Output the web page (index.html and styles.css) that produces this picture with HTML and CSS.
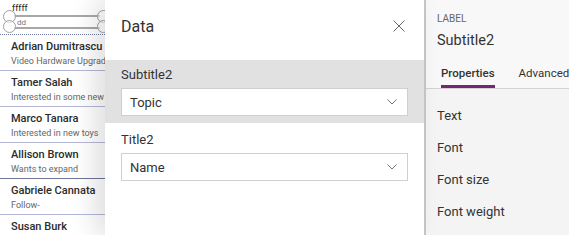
FILE: index.html
```html
<!DOCTYPE html>
<html>
<head>
<meta charset="utf-8">
<link rel="stylesheet" href="styles.css">
</head>
<body>
<div class="app">
  <div class="list">
    <div class="sel">
      <div class="sel-top">fffff</div>
      <div class="sel-sub">dd</div>
      <span class="hline h1"></span>
      <span class="hline h2"></span>
      <span class="handle hl1"></span>
      <span class="handle hl2"></span>
      <span class="handle hr1"></span>
      <span class="handle hr2"></span>
    </div>
    <div class="row"><div class="name">Adrian Dumitrascu</div><div class="sub">Video Hardware Upgrade</div></div>
    <div class="row"><div class="name">Tamer Salah</div><div class="sub">Interested in some new</div></div>
    <div class="row"><div class="name">Marco Tanara</div><div class="sub">Interested in new toys</div></div>
    <div class="row dark"><div class="name">Allison Brown</div><div class="sub">Wants to expand</div></div>
    <div class="row"><div class="name">Gabriele Cannata</div><div class="sub">Follow-</div></div>
    <div class="row"><div class="name">Susan Burk</div><div class="sub">Interested</div></div>
  </div>
  <div class="data">
    <div class="data-head">
      <span class="data-title">Data</span>
      <svg class="close" width="12" height="12" viewBox="0 0 12 12"><path d="M0.5 0.5 L11.5 11.5 M11.5 0.5 L0.5 11.5" stroke="#666" stroke-width="1" fill="none"/></svg>
    </div>
    <div class="field active">
      <div class="flabel">Subtitle2</div>
      <div class="dd"><span>Topic</span><svg width="10" height="6" viewBox="0 0 10 6"><path d="M0.5 0.5 L5 5 L9.5 0.5" stroke="#777" fill="none"/></svg></div>
    </div>
    <div class="field">
      <div class="flabel">Title2</div>
      <div class="dd"><span>Name</span><svg width="10" height="6" viewBox="0 0 10 6"><path d="M0.5 0.5 L5 5 L9.5 0.5" stroke="#777" fill="none"/></svg></div>
    </div>
  </div>
  <div class="props">
    <div class="props-head">
      <div class="kind">LABEL</div>
      <div class="pname">Subtitle2</div>
      <div class="tabs">
        <div class="tab on">Properties</div>
        <div class="tab">Advanced</div>
      </div>
    </div>
    <div class="plist">
      <div class="pitem">Text</div>
      <div class="pitem">Font</div>
      <div class="pitem">Font size</div>
      <div class="pitem">Font weight</div>
    </div>
  </div>
</div>
</body>
</html>
```
FILE: styles.css
```css
* { box-sizing: border-box; }
html, body { margin: 0; padding: 0; }
body {
  width: 569px;
  height: 235px;
  overflow: hidden;
  font-family: Roboto, "Open Sans", sans-serif;
  color: #333;
  background: #fff;
}
.app {
  display: flex;
  height: 235px;
  overflow: hidden;
}
.list {
  width: 105px;
  flex: none;
  overflow: hidden;
  background: #fff;
}
.sel {
  position: relative;
  height: 35px;
  border-bottom: 1px dotted #6d7aa3;
}
.sel-top {
  position: absolute;
  left: 12px;
  top: 2px;
  font-size: 9px;
  line-height: 12px;
  color: #222;
}
.sel-sub {
  position: absolute;
  left: 17px;
  top: 17px;
  font-size: 8px;
  line-height: 12px;
  color: #777;
}
.hline {
  position: absolute;
  left: 14px;
  width: 86px;
  height: 2px;
  background: #a8a8a8;
}
.h1 { top: 15px; }
.h2 { top: 27px; }
.handle {
  position: absolute;
  width: 13px;
  height: 13px;
  border-radius: 50%;
  border: 1px solid #a0a0a0;
  background: rgba(255,255,255,0.6);
}
.hl1 { left: 3px; top: 10px; }
.hl2 { left: 3px; top: 20px; }
.hr1 { left: 97px; top: 10px; }
.hr2 { left: 97px; top: 20px; }
.row {
  height: 36px;
  padding: 4px 0 0 11px;
  border-bottom: 1px solid #b4b8d6;
  white-space: nowrap;
  overflow: hidden;
}
.row.dark { border-bottom-color: #6e7599; }
.name {
  font-size: 11px;
  line-height: 15px;
  font-weight: 500;
  color: #2b2b2b;
}
.sub {
  font-size: 9px;
  line-height: 15px;
  color: #666;
}
.data {
  width: 319px;
  flex: none;
  background: #fff;
  box-shadow: -10px 0 24px rgba(0,0,0,0.13);
  position: relative;
  z-index: 2;
}
.data-head {
  height: 60px;
  display: flex;
  align-items: center;
  justify-content: space-between;
  padding: 0 19px 8px 16px;
}
.data-title {
  font-size: 16px;
  color: #333;
}
.field {
  padding: 7px 16px 7px 16px;
}
.field.active {
  background: #e1e1e1;
  padding-top: 6px;
}
.flabel {
  font-size: 13px;
  line-height: 18px;
  color: #333;
  margin-bottom: 4px;
}
.field:not(.active) .flabel { margin-top: 1px; }
.dd {
  height: 28px;
  border: 1px solid #cfcfcf;
  background: #fff;
  display: flex;
  align-items: center;
  justify-content: space-between;
  padding: 0 10px 0 8px;
  font-size: 13px;
  color: #333;
}
.props {
  flex: 1;
  border-left: 2px solid #c8c8c8;
  background: #f4f4f4;
}
.props-head {
  padding: 11px 0 0 11px;
  border-bottom: 1px solid #d2d2d2;
  background: #f8f8f8;
}
.kind {
  font-size: 10px;
  line-height: 16px;
  color: #666;
}
.pname {
  font-size: 14.5px;
  line-height: 22px;
  color: #333;
  margin-top: 3px;
  margin-bottom: 12px;
}
.tabs {
  display: flex;
  gap: 24px;
  padding-left: 4px;
}
.tab {
  font-size: 11.5px;
  line-height: 18px;
  padding-bottom: 3px;
  color: #333;
  border-bottom: 3px solid transparent;
  white-space: nowrap;
}
.tab.on {
  font-weight: 500;
  border-bottom-color: #742774;
}
.plist {
  padding: 18px 0 0 11px;
}
.pitem {
  font-size: 13px;
  line-height: 18px;
  margin-bottom: 14px;
  color: #333;
}
```
